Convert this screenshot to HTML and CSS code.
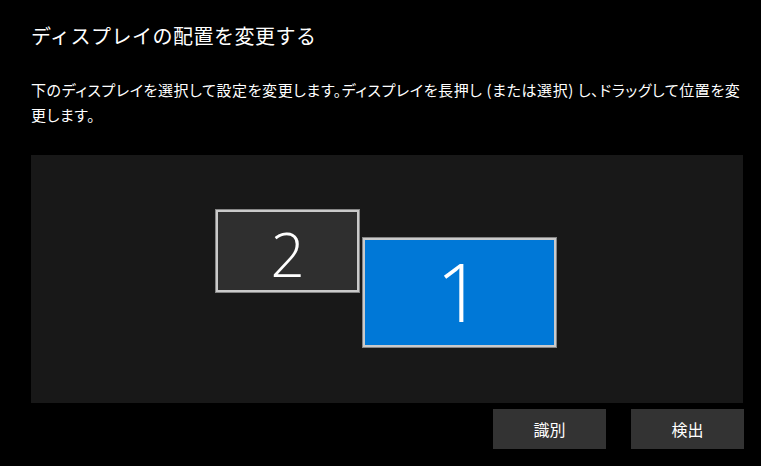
FILE: index.html
```html
<!DOCTYPE html>
<html lang="ja">
<head>
<meta charset="utf-8">
<link rel="stylesheet" href="styles.css">
</head>
<body>
<div class="page">
  <h1 class="title">ディスプレイの配置を変更する</h1>
  <p class="desc">下のディスプレイを選択して設定を変更します。ディスプレイを長押し (または選択) し、ドラッグして位置を変更します。</p>
  <div class="canvas">
    <div class="monitor monitor-2"><span class="num num-2">2</span></div>
    <div class="monitor monitor-1"><span class="num num-1">1</span></div>
  </div>
  <div class="actions">
    <button class="btn">識別</button>
    <button class="btn">検出</button>
  </div>
</div>
</body>
</html>
```

FILE: styles.css
```css
html, body {
  margin: 0;
  padding: 0;
  background: #000;
  width: 761px;
  height: 466px;
  overflow: hidden;
}
body {
  font-family: "Noto Sans CJK JP", "Noto Sans", sans-serif;
  color: #fff;
}
.page {
  padding-left: 31px;
  width: 713px;
}
.title {
  margin: 0;
  padding-top: 22px;
  font-size: 20px;
  line-height: 28px;
  font-weight: 400;
  letter-spacing: 0.5px;
}
.desc {
  margin: 27px 0 0 0;
  font-size: 15px;
  line-height: 25px;
  height: 51px;
  font-feature-settings: "palt";
  letter-spacing: 0.6px;
}
.canvas {
  position: relative;
  margin-top: 27px;
  width: 712px;
  height: 248px;
  background: #181818;
}
.monitor {
  position: absolute;
  box-sizing: border-box;
  border: 2px solid #cacaca;
  box-shadow: 0 0 0 1px #858585;
  display: flex;
  align-items: center;
  justify-content: center;
  color: #fff;
  font-family: "Open Sans", Roboto, sans-serif;
  font-weight: 300;
}
.monitor-2 {
  left: 185px;
  top: 55px;
  width: 143px;
  height: 82px;
  background: #2f2f2f;
}
.monitor-1 {
  left: 332px;
  top: 83px;
  width: 193px;
  height: 109px;
  background: #0078d7;
}
.num-2 {
  font-size: 60px;
  line-height: 1;
  margin-top: 6px;
}
.num-1 {
  font-size: 82px;
  line-height: 1;
  margin-top: -6px;
}
.actions {
  display: flex;
  justify-content: flex-end;
  gap: 25px;
  margin-top: 6px;
}
.btn {
  width: 113px;
  height: 40px;
  border: 0;
  padding: 0;
  background: #333;
  color: #fff;
  font-family: "Noto Sans CJK JP", sans-serif;
  font-size: 16px;
}
```
